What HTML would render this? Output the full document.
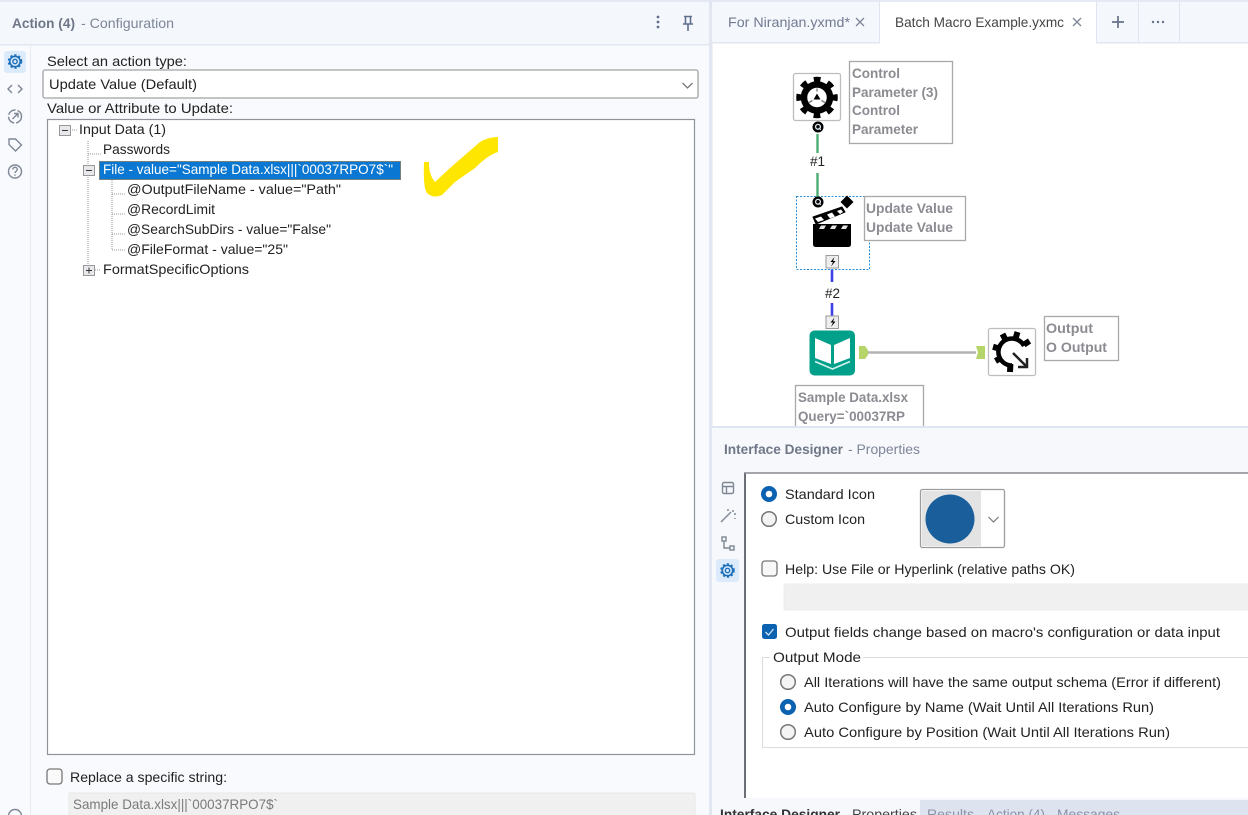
<!DOCTYPE html>
<html><head><meta charset="utf-8"><style>
html,body{margin:0;padding:0;width:1248px;height:815px;overflow:hidden;background:#fff}
svg{display:block;filter:blur(.3px)}
text{font-family:"Liberation Sans",sans-serif;font-size:14px;fill:#222}
.g{fill:#8b8b92;font-weight:bold}
.h{fill:#6f7787;font-weight:bold}
.m{fill:#7d8598}
.ic{fill:none;stroke:#7e8794;stroke-width:1.4}
.rd{fill:#f4f4f4;stroke:#777;stroke-width:1.5}
</style></head><body>
<svg width="1248" height="815" viewBox="0 0 1248 815" xmlns="http://www.w3.org/2000/svg">
<rect width="1248" height="815" fill="#fff"/>
<!-- left panel -->
<rect x="0" y="0" width="710" height="815" fill="#f9fafd"/>
<rect x="0" y="2" width="710" height="42" fill="#f4f7fc"/>
<rect x="0" y="0" width="1248" height="2" fill="#e4e9f3"/>
<rect x="0" y="44" width="710" height="1.5" fill="#e2e7f2"/>
<rect x="30" y="45" width="1" height="770" fill="#e6eaf3"/>
<rect x="709" y="0" width="3.5" height="815" fill="#e1e6f1"/>
<text x="12" y="28" class="h" textLength="63" lengthAdjust="spacingAndGlyphs">Action (4)</text>
<text x="81" y="28" class="m" textLength="93" lengthAdjust="spacingAndGlyphs">- Configuration</text>
<circle cx="658" cy="17" r="1.4" fill="#5f6f8c"/><circle cx="658" cy="22" r="1.4" fill="#5f6f8c"/><circle cx="658" cy="27" r="1.4" fill="#5f6f8c"/>
<path d="M684 16.5h8M685.5 16.5v7M690.5 16.5v7M683 24h10M688 24v7" fill="none" stroke="#5f6f8c" stroke-width="1.6"/>
<!-- left rail -->
<rect x="4" y="51" width="22" height="22" rx="3" fill="#dcebfb"/>
<circle cx="15" cy="61.5" r="2.2" fill="none" stroke="#1c6fb8" stroke-width="1.4"/>
<circle cx="15" cy="61.5" r="5.2" fill="none" stroke="#1c6fb8" stroke-width="1.6"/>
<circle cx="15" cy="61.5" r="6.5" fill="none" stroke="#1c6fb8" stroke-width="1.6" stroke-dasharray="2.2 2.05"/>
<path d="M12 85l-4 4 4 4M18 85l4 4-4 4" class="ic"/>
<circle cx="15" cy="116.5" r="6.5" class="ic" stroke-dasharray="9 2"/>
<path d="M12.5 119l5-5M14 113.5h4v4" class="ic"/>
<path d="M9 139h6.5l6 6-6 6-6.5-6.5z" class="ic"/>
<circle cx="15" cy="171.5" r="6.5" class="ic"/>
<path d="M12.8 169.5c.3-3 4.5-2.8 4.5 0 0 1.7-2.3 1.8-2.3 3.5" class="ic"/><circle cx="15" cy="175" r=".8" fill="#7e8794"/>
<circle cx="15" cy="816" r="6.5" class="ic"/>
<!-- form -->
<text x="47" y="66" textLength="140" lengthAdjust="spacingAndGlyphs">Select an action type:</text>
<rect x="43" y="70" width="655" height="28" rx="2" fill="#fff" stroke="#a2a2a2" stroke-width="1.3"/>
<text x="49" y="89" textLength="148" lengthAdjust="spacingAndGlyphs">Update Value (Default)</text>
<path d="M682.5 83l5 5 5-5" fill="none" stroke="#777" stroke-width="1.3"/>
<text x="47" y="113" textLength="186" lengthAdjust="spacingAndGlyphs">Value or Attribute to Update:</text>
<rect x="47.5" y="119.5" width="647" height="635" fill="#fff" stroke="#8f939b" stroke-width="1.2"/>
<!-- tree lines -->
<path d="M88 141V265M88 154H101M112 180V250M112 194H125M112 214H125M112 234H125M112 250H125M72 130H77M95 270H101" fill="none" stroke="#999" stroke-width="1" stroke-dasharray="1 1"/>
<rect x="59.5" y="125.5" width="11" height="10" fill="#e8e8ec" stroke="#999"/><path d="M62 130.5h6" stroke="#333"/>
<rect x="83.5" y="165.5" width="11" height="10" fill="#e8e8ec" stroke="#999"/><path d="M86 170.5h6" stroke="#333"/>
<rect x="83.5" y="265.5" width="11" height="10" fill="#e8e8ec" stroke="#999"/><path d="M86 270.5h6M89 267.5v6" stroke="#333"/>
<text x="79" y="134" textLength="87" lengthAdjust="spacingAndGlyphs">Input Data (1)</text>
<text x="103" y="154" textLength="67" lengthAdjust="spacingAndGlyphs">Passwords</text>
<rect x="99" y="161" width="302" height="19" fill="#0a78d2"/>
<rect x="99.5" y="161.5" width="301" height="18" fill="none" stroke="#e08a2c" stroke-dasharray="1 1"/>
<text x="103" y="174" style="fill:#fff" textLength="290" lengthAdjust="spacingAndGlyphs">File - value="Sample Data.xlsx|||`00037RPO7$`"</text>
<text x="127" y="194" textLength="214" lengthAdjust="spacingAndGlyphs">@OutputFileName - value="Path"</text>
<text x="127" y="214" textLength="88" lengthAdjust="spacingAndGlyphs">@RecordLimit</text>
<text x="127" y="234" textLength="204" lengthAdjust="spacingAndGlyphs">@SearchSubDirs - value="False"</text>
<text x="127" y="254" textLength="161" lengthAdjust="spacingAndGlyphs">@FileFormat - value="25"</text>
<text x="103" y="274" textLength="146" lengthAdjust="spacingAndGlyphs">FormatSpecificOptions</text>
<path d="M424 162H429Q428.5 174 435 182L450 168L480 142Q488 137 498 137V152Q488 155 475 168L455 182L442 195Q433 199 427 193Q423 188 424 162Z" fill="#ffe600"/>
<rect x="47" y="769" width="15" height="15" rx="3" fill="#fafafa" stroke="#777" stroke-width="1.3"/>
<text x="70" y="782" textLength="157" lengthAdjust="spacingAndGlyphs">Replace a specific string:</text>
<rect x="69" y="793" width="626" height="24" rx="1" fill="#f0f0f0" stroke="#e8e8e8"/>
<text x="73" y="809" style="fill:#7a7a7a" textLength="205" lengthAdjust="spacingAndGlyphs">Sample Data.xlsx|||`00037RPO7$`</text>
<!-- tabs -->
<rect x="712" y="2" width="536" height="40" fill="#f4f7fc"/>
<rect x="712" y="42" width="536" height="1.5" fill="#dfe5f1"/>
<rect x="880" y="2" width="216" height="42" fill="#fff"/>
<rect x="1096" y="2" width="1" height="40" fill="#dfe5f1"/><rect x="1138" y="2" width="1" height="40" fill="#dfe5f1"/><rect x="1179" y="2" width="1" height="40" fill="#dfe5f1"/>
<rect x="879" y="2" width="1" height="40" fill="#dfe5f1"/>
<text x="728" y="27" style="fill:#727a92" textLength="122" lengthAdjust="spacingAndGlyphs">For Niranjan.yxmd*</text>
<path d="M856 18l8 8M864 18l-8 8" stroke="#7f8799" stroke-width="1.3"/>
<text x="895" y="27" style="fill:#444" textLength="169" lengthAdjust="spacingAndGlyphs">Batch Macro Example.yxmc</text>
<path d="M1073 18l8 8M1081 18l-8 8" stroke="#7f8799" stroke-width="1.3"/>
<path d="M1118 16v12M1112 22h12" stroke="#67718a" stroke-width="1.7"/>
<circle cx="1153" cy="22" r="1.2" fill="#67718a"/><circle cx="1158" cy="22" r="1.2" fill="#67718a"/><circle cx="1163" cy="22" r="1.2" fill="#67718a"/>
<!-- canvas connections -->
<path d="M817.5 134V153M817.5 173V197" stroke="#4cae72" stroke-width="2.4"/>
<path d="M832 268V282M832 303V316" stroke="#3f3fe8" stroke-width="2.6"/>
<text x="810" y="166" style="fill:#222" textLength="15" lengthAdjust="spacingAndGlyphs">#1</text>
<text x="825" y="298" style="fill:#222" textLength="15" lengthAdjust="spacingAndGlyphs">#2</text>
<!-- control parameter tool -->
<rect x="793.5" y="73.5" width="47" height="47" rx="2" fill="#fff" stroke="#bdbdbd" stroke-width="1.3"/>
<circle cx="817" cy="97.5" r="13" fill="none" stroke="#000" stroke-width="6.5"/>
<circle cx="817" cy="97.5" r="18" fill="none" stroke="#000" stroke-width="5.5" stroke-dasharray="6.6 7.54" stroke-dashoffset="3.3"/>
<path d="M817 93.5L820.5 99.5H813.5Z" fill="#000"/>
<path d="M817 88.5V91.5M825 102.5L821.5 100.5M809 102.5L812.5 100.5" stroke="#777" stroke-width="1.3"/>
<circle cx="818" cy="127" r="5.5" fill="#000"/>
<circle cx="818" cy="126.8" r="2.4" fill="none" stroke="#dfe8f0" stroke-width="1.3"/>
<path d="M819 128l1.8 1.8" stroke="#dfe8f0" stroke-width="1.1"/>
<rect x="849.5" y="61.5" width="103" height="82" fill="#fff" stroke="#a8a8a8" stroke-width="1.3"/>
<text x="852" y="78" class="g" textLength="48" lengthAdjust="spacingAndGlyphs">Control</text>
<text x="852" y="97" class="g" textLength="86" lengthAdjust="spacingAndGlyphs">Parameter (3)</text>
<text x="852" y="115" class="g" textLength="48" lengthAdjust="spacingAndGlyphs">Control</text>
<text x="852" y="134" class="g" textLength="66" lengthAdjust="spacingAndGlyphs">Parameter</text>
<!-- action tool -->
<rect x="796.5" y="196.5" width="73" height="73" fill="#fff" stroke="#2a8fdc" stroke-width="1" stroke-dasharray="2 1.5"/>
<path d="M817.5 196V198" stroke="#4cae72" stroke-width="2.4"/>
<circle cx="818" cy="202" r="5.5" fill="#000"/>
<circle cx="818" cy="201.8" r="2.4" fill="none" stroke="#dfe8f0" stroke-width="1.3"/>
<path d="M819 203l1.8 1.8" stroke="#dfe8f0" stroke-width="1.1"/>
<path d="M847 195.5l6.5 6.5-6.5 6.5-6.5-6.5z" fill="#000"/>
<path d="M813 217L842 207L845 212L816 224Z" fill="#000" stroke="#000" stroke-width="1" stroke-linejoin="round"/>
<path d="M815 218.5L821 216.5L824 220L818 222ZM827 214.5L832 212.5L835 216.5L830 218.5ZM837 211L841 209.5L843 212L840 214Z" fill="#fff"/>
<path d="M813 224H851V244q0 3-3 3H816q-3 0-3-3Z" fill="#000"/>
<path d="M821 225.5h5l-2 3.5h-5zM832 225.5h5l-2 3.5h-5zM843 225.5h5l-2 3.5h-5z" fill="#e4e4e4"/>
<rect x="826" y="255.5" width="12.5" height="12.5" fill="#eee" stroke="#999"/>
<path d="M834.5 257l-4 5h2.5l-2 4.5 4.5-5.5h-2.5z" fill="#000"/>
<rect x="864.5" y="196.5" width="101" height="44" fill="#fff" stroke="#a8a8a8" stroke-width="1.3"/>
<text x="866" y="213" class="g" textLength="87" lengthAdjust="spacingAndGlyphs">Update Value</text>
<text x="866" y="232" class="g" textLength="87" lengthAdjust="spacingAndGlyphs">Update Value</text>
<!-- input tool -->
<rect x="826" y="316" width="12.5" height="12.5" fill="#eee" stroke="#999"/>
<path d="M834.5 317.5l-4 5h2.5l-2 4.5 4.5-5.5h-2.5z" fill="#000"/>
<rect x="809.5" y="330.5" width="45.5" height="45" rx="5" fill="#00a08a"/>
<path d="M815 338L831 345V364L815 358ZM850 338L834 345V364L850 358Z" fill="#fff"/>
<path d="M815 361.5L832.5 369L850 361.5" fill="none" stroke="#d6f2ec" stroke-width="1.6"/>
<path d="M859 346h6l3 4v5l-3 4h-6z" fill="#b5d56a"/>
<path d="M868 352.5H976" stroke="#b3b3b3" stroke-width="2.5"/>
<path d="M976 346h9v13h-9l2-6.5z" fill="#b5d56a"/>
<!-- output tool -->
<rect x="988.5" y="328.5" width="47" height="47" rx="2" fill="#fff" stroke="#bdbdbd" stroke-width="1.3"/>
<path d="M1024 346A13.5 13.5 0 1 0 1012 365.5" fill="none" stroke="#000" stroke-width="4.5"/>
<path d="M1005.4 339.6L1002.5 334M1015.6 338.4L1017.5 332M1023.9 344.6L1029.5 341M998.5 348.3L993 346.8M999.6 358.6L995.5 361M1010.4 364L1010 372" stroke="#000" stroke-width="6"/>
<path d="M1013 353L1027 367M1027 358V367H1018" fill="none" stroke="#222" stroke-width="2.5"/>
<rect x="1044.5" y="316.5" width="74" height="44" fill="#fff" stroke="#a8a8a8" stroke-width="1.3"/>
<text x="1046" y="333" class="g" textLength="47" lengthAdjust="spacingAndGlyphs">Output</text>
<text x="1046" y="352" class="g" textLength="61" lengthAdjust="spacingAndGlyphs">O Output</text>
<rect x="795.5" y="385.5" width="128" height="50" fill="#fff" stroke="#a8a8a8" stroke-width="1.3"/>
<text x="798" y="402" class="g" textLength="110" lengthAdjust="spacingAndGlyphs">Sample Data.xlsx</text>
<text x="798" y="421" class="g" textLength="107" lengthAdjust="spacingAndGlyphs">Query=`00037RP</text>
<!-- interface designer -->
<rect x="712" y="426" width="536" height="389" fill="#f6f8fc"/>
<rect x="712" y="426" width="536" height="2" fill="#dfe5f1"/>
<text x="724" y="454" class="h" textLength="119" lengthAdjust="spacingAndGlyphs">Interface Designer</text>
<text x="848" y="454" class="m" textLength="72" lengthAdjust="spacingAndGlyphs">- Properties</text>
<rect x="745" y="473" width="503" height="325" fill="#fff"/>
<path d="M745 798V473" fill="none" stroke="#6c7076" stroke-width="2"/>
<path d="M744 473H1248" fill="none" stroke="#85898f" stroke-width="1.6"/>
<!-- rail 2 -->
<rect x="722.5" y="482.5" width="11" height="11" rx="1.5" class="ic"/><path d="M722.5 486.5h11M726.5 486.5v7" class="ic"/>
<path d="M721 522l10-10M733 510v2M736 514h-2M728 509v2M735 518v1" class="ic"/>
<rect x="722" y="537" width="4" height="4" class="ic"/><rect x="730" y="546" width="4" height="4" class="ic"/><path d="M724 541v7h6" class="ic"/>
<rect x="716" y="559" width="23" height="23" rx="3" fill="#dcebfb"/>
<circle cx="727.5" cy="570.5" r="2.2" fill="none" stroke="#1c6fb8" stroke-width="1.4"/>
<circle cx="727.5" cy="570.5" r="5.2" fill="none" stroke="#1c6fb8" stroke-width="1.6"/>
<circle cx="727.5" cy="570.5" r="6.5" fill="none" stroke="#1c6fb8" stroke-width="1.6" stroke-dasharray="2.2 2.05"/>
<!-- radios -->
<circle cx="769" cy="494" r="8" fill="#0a62b0"/><circle cx="769" cy="494" r="3.3" fill="#fff"/>
<text x="785" y="499" textLength="90" lengthAdjust="spacingAndGlyphs">Standard Icon</text>
<circle cx="769" cy="519" r="7.3" class="rd"/>
<text x="785" y="524" textLength="80" lengthAdjust="spacingAndGlyphs">Custom Icon</text>
<rect x="920.5" y="489.5" width="84" height="58" rx="2" fill="#fff" stroke="#9c9c9c" stroke-width="1.3"/>
<rect x="922" y="491" width="59" height="55" fill="#e3e3e3"/>
<circle cx="950" cy="519" r="24.5" fill="#1a5f9b"/>
<path d="M988.5 517l5 5 5-5" fill="none" stroke="#777" stroke-width="1.2"/>
<rect x="762" y="561" width="15" height="15" rx="3" fill="#f8f8f8" stroke="#777" stroke-width="1.3"/>
<text x="785" y="574" textLength="290" lengthAdjust="spacingAndGlyphs">Help: Use File or Hyperlink (relative paths OK)</text>
<rect x="784" y="584" width="470" height="26" rx="1" fill="#f0f0f0" stroke="#ececec"/>
<rect x="762" y="624" width="15" height="15" rx="2.5" fill="#0a62b0"/>
<path d="M765.5 632l3 3 5-6" fill="none" stroke="#cfe2f5" stroke-width="1.3"/>
<text x="785" y="637" textLength="435" lengthAdjust="spacingAndGlyphs">Output fields change based on macro's configuration or data input</text>
<rect x="762.5" y="657.5" width="500" height="90" fill="#fff" stroke="#dcdcdc"/>
<rect x="770" y="650" width="93" height="14" fill="#fff"/>
<text x="773" y="662" textLength="88" lengthAdjust="spacingAndGlyphs">Output Mode</text>
<circle cx="788" cy="682" r="7.3" class="rd"/>
<text x="804" y="687" textLength="417" lengthAdjust="spacingAndGlyphs">All Iterations will have the same output schema (Error if different)</text>
<circle cx="788" cy="707" r="8" fill="#0a62b0"/><circle cx="788" cy="707" r="3.3" fill="#fff"/>
<text x="804" y="712" textLength="350" lengthAdjust="spacingAndGlyphs">Auto Configure by Name (Wait Until All Iterations Run)</text>
<circle cx="788" cy="732" r="7.3" class="rd"/>
<text x="804" y="737" textLength="366" lengthAdjust="spacingAndGlyphs">Auto Configure by Position (Wait Until All Iterations Run)</text>
<!-- bottom tabs -->
<rect x="712" y="798" width="536" height="17" fill="#f6f8fc"/>
<rect x="920" y="800" width="328" height="15" fill="#dde4f0"/>
<text x="720" y="819" style="fill:#333;font-weight:bold" textLength="120" lengthAdjust="spacingAndGlyphs">Interface Designer</text>
<text x="852" y="819" style="fill:#444" textLength="65" lengthAdjust="spacingAndGlyphs">Properties</text>
<text x="927" y="819" style="fill:#8a93a8" textLength="47" lengthAdjust="spacingAndGlyphs">Results</text>
<text x="987" y="819" style="fill:#8a93a8" textLength="58" lengthAdjust="spacingAndGlyphs">Action (4)</text>
<text x="1057" y="819" style="fill:#8a93a8" textLength="63" lengthAdjust="spacingAndGlyphs">Messages</text>
</svg>
</body></html>
